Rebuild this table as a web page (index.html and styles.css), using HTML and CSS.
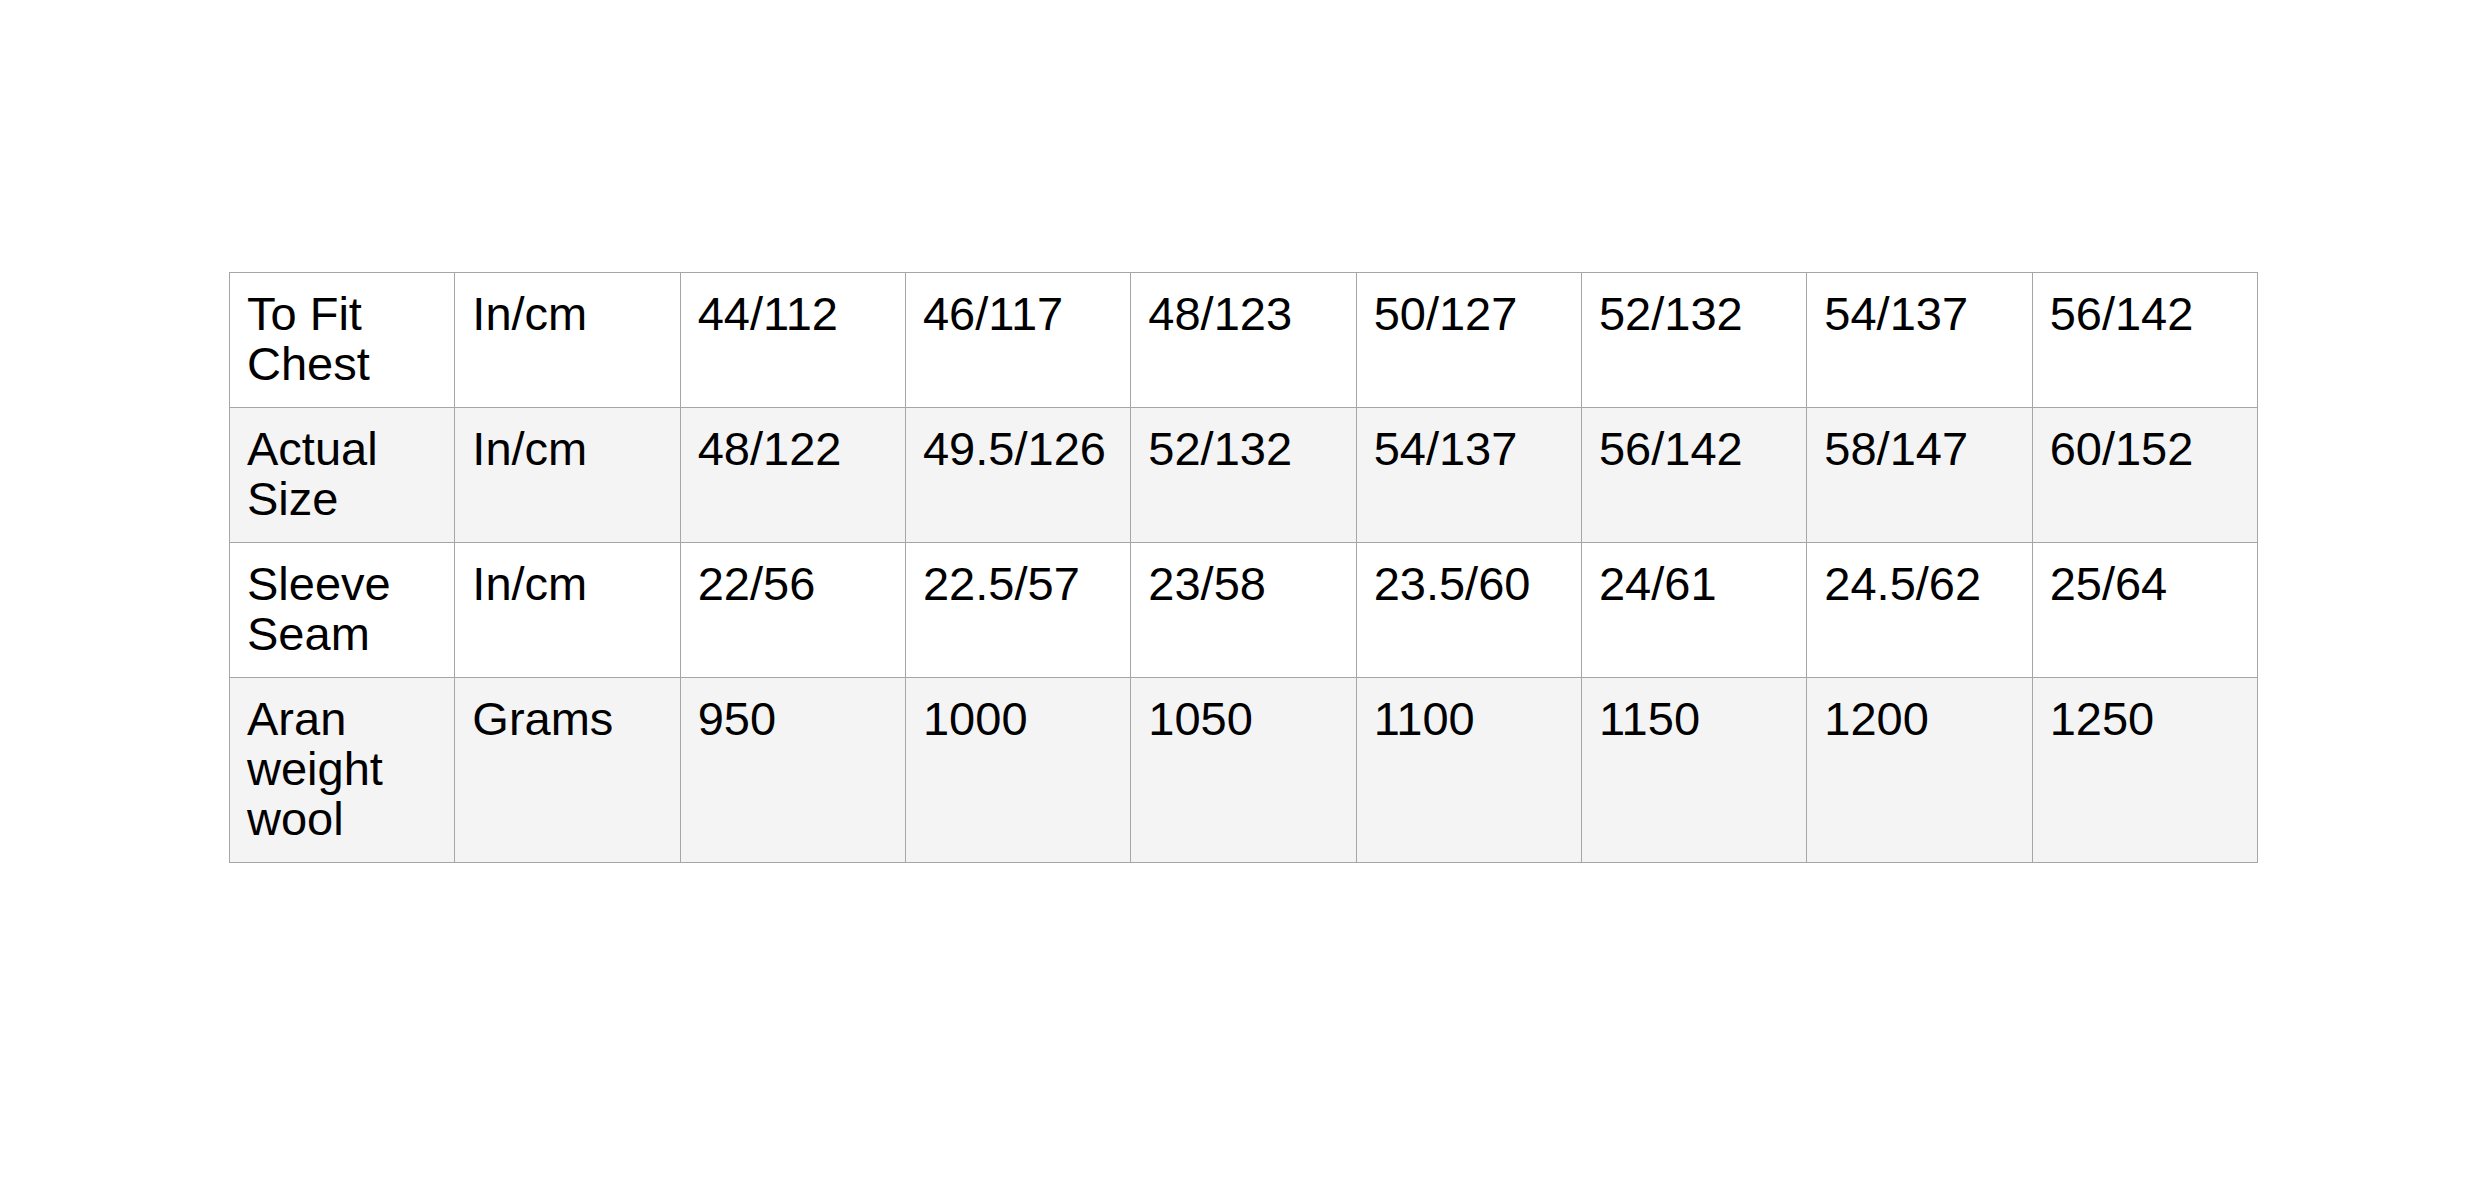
FILE: index.html
```html
<!DOCTYPE html>
<html>
<head>
<meta charset="utf-8">
<link rel="stylesheet" href="styles.css">
</head>
<body>
<div class="wrap">
<table class="sizes">
<tr><td>To Fit<br>Chest</td><td>In/cm</td><td>44/112</td><td>46/117</td><td>48/123</td><td>50/127</td><td>52/132</td><td>54/137</td><td>56/142</td></tr>
<tr class="alt"><td>Actual<br>Size</td><td>In/cm</td><td>48/122</td><td>49.5/126</td><td>52/132</td><td>54/137</td><td>56/142</td><td>58/147</td><td>60/152</td></tr>
<tr><td>Sleeve<br>Seam</td><td>In/cm</td><td>22/56</td><td>22.5/57</td><td>23/58</td><td>23.5/60</td><td>24/61</td><td>24.5/62</td><td>25/64</td></tr>
<tr class="alt"><td>Aran<br>weight<br>wool</td><td>Grams</td><td>950</td><td>1000</td><td>1050</td><td>1100</td><td>1150</td><td>1200</td><td>1250</td></tr>
</table>
</div>
</body>
</html>
```
FILE: styles.css
```css
html, body {
  margin: 0;
  padding: 0;
  background: #fff;
}
.wrap {
  padding: 272px 0 0 229px;
}
.sizes {
  border-collapse: collapse;
  table-layout: fixed;
  width: 2029px;
  font-family: "Liberation Sans", Arial, sans-serif;
  font-size: 47px;
  line-height: 50px;
  color: #000;
}
.sizes td {
  border: 1px solid #a6a6a6;
  padding: 16px 16px 18px 17px;
  vertical-align: top;
  white-space: nowrap;
}
.sizes tr.alt td {
  background: #f4f4f4;
}
```
